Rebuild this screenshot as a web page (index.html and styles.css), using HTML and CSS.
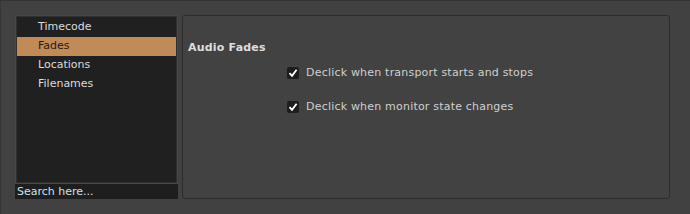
FILE: index.html
```html
<!DOCTYPE html>
<html lang="en">
<head>
  <meta charset="UTF-8" />
  <title>Preferences</title>
  <link rel="stylesheet" href="styles.css">
</head>
<body>

<div class="prefs">
  <div class="sidebar">
    <ul class="pages">
      <li>Timecode</li>
      <li class="active">Fades</li>
      <li>Locations</li>
      <li>Filenames</li>
    </ul>
    <div class="search">Search here...</div>
  </div>

  <section class="panel">
    <h2>Audio Fades</h2>
    <label class="check"><span class="box"><svg width="10" height="10" viewBox="0 0 10 10"><path d="M1.5 5.2 L4 7.8 L8.6 1.8" fill="none" stroke="#fff" stroke-width="1.8"/></svg></span>Declick when transport starts and stops</label>
    <label class="check"><span class="box"><svg width="10" height="10" viewBox="0 0 10 10"><path d="M1.5 5.2 L4 7.8 L8.6 1.8" fill="none" stroke="#fff" stroke-width="1.8"/></svg></span>Declick when monitor state changes</label>
  </section>
</div>

</body>
</html>
```

FILE: styles.css
```css
html, body {
  height: 100%;
}
body {
  margin: 0;
  background: #414141;
  font-family: "DejaVu Sans", sans-serif;
  font-size: 11px;
  color: #d8d8d8;
  border-top: 1px solid #333;
  border-left: 1px solid #363636;
  box-sizing: border-box;
}
.prefs {
  display: flex;
  padding: 14px 20px 0 14px;
  height: 184px;
}
.sidebar {
  width: 163px;
  display: flex;
  flex-direction: column;
}
.pages {
  list-style: none;
  margin: 0;
  padding: 1px 0 0;
  flex: 1;
  background: #202020;
  border: 1px solid #303030;
  box-shadow: 0 0 0 1px #474747;
  margin: 1px 1px 0;
}
.pages li {
  height: 19px;
  line-height: 18px;
  padding-left: 21px;
  color: #dcdcdc;
}
.pages li.active {
  background: #c08b57;
  color: #2b1a0c;
}
.search {
  height: 15px;
  margin-top: 1px;
  background: #1e1e1e;
  color: #cfe0ea;
  line-height: 16px;
  padding-left: 2px;
}
.panel {
  flex: 1;
  margin-left: 4px;
  border: 1px solid #2c2c2c;
  border-radius: 3px;
  background: #424242;
  padding: 0 5px;
}
.panel h2 {
  margin: 25px 0 12px;
  font-size: 11px;
  font-weight: bold;
  letter-spacing: 0.2px;
  color: #dedede;
}
.check {
  display: flex;
  align-items: center;
  margin-left: 99px;
  margin-bottom: 21px;
  letter-spacing: 0.2px;
  color: #d0d0d0;
}
.box {
  width: 12px;
  height: 12px;
  border-radius: 2px;
  background: #1d1d1d;
  display: flex;
  align-items: center;
  justify-content: center;
  margin-right: 7px;
}
```
